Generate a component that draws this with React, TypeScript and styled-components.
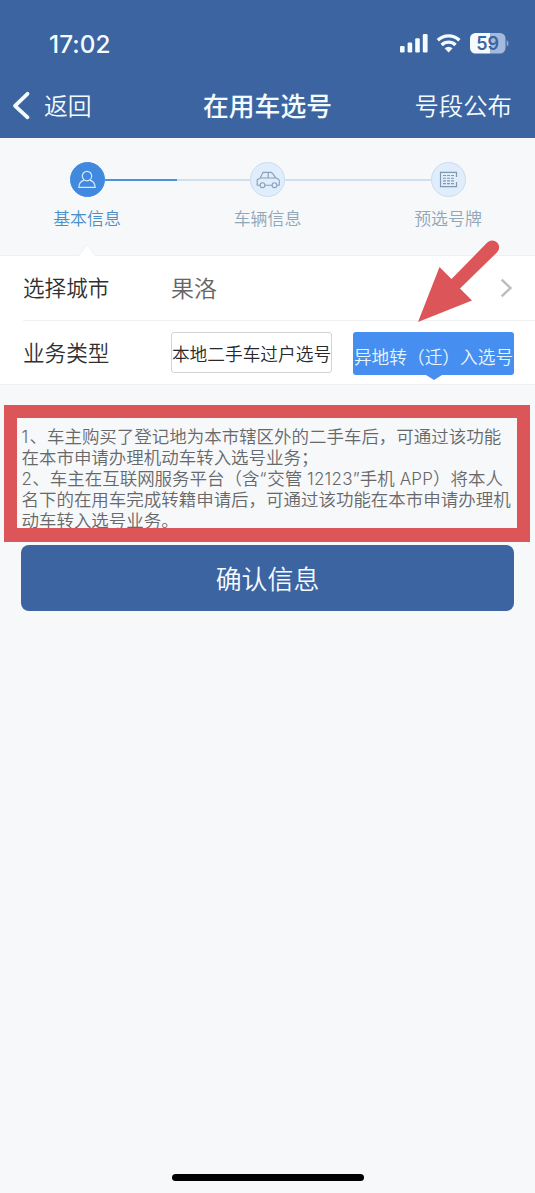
import React from 'react';
import styled, { createGlobalStyle } from 'styled-components';

const GlobalStyle = createGlobalStyle`
  * { box-sizing: border-box; }
  body {
    margin: 0;
    background: #f6f8fa;
    font-family: Inter, 'Noto Sans CJK SC', sans-serif;
  }
`;

const Screen = styled.div`
  position: relative;
  display: flex;
  flex-direction: column;
  width: 535px;
  height: 1193px;
  overflow: hidden;
  background: #f6f8fa;
  font-family: 'Noto Sans CJK SC', sans-serif;
  font-weight: 350;
  white-space: nowrap;
`;

const Header = styled.header`
  height: 138px;
  background: #3c64a1;
  color: #f4fbff;
`;

const StatusBar = styled.div`
  display: flex;
  align-items: center;
  justify-content: space-between;
  height: 74px;
  padding: 13px 26px 0 49px;
`;

const Clock = styled.span`
  font: 550 24.3px/30px Inter, sans-serif;
  letter-spacing: 0.1px;
`;

const NavBar = styled.nav`
  display: grid;
  grid-template-columns: 1fr auto 1fr;
  align-items: center;
  height: 62px;
  padding: 0 23px 0 12px;
`;

const BackButton = styled.div`
  display: flex;
  align-items: center;
  gap: 13px;
  font-size: 23.8px;
  line-height: 36px;
`;

const Title = styled.h1`
  margin: 0;
  padding-left: 11px;
  font-size: 25.8px;
  line-height: 36px;
  font-weight: 500;
`;

const NavAction = styled.span`
  justify-self: end;
  font-size: 24.4px;
  line-height: 36px;
`;

const Steps = styled.section`
  position: relative;
  display: flex;
  justify-content: center;
  height: 118px;
  padding-top: 24px;
  border-bottom: 1px solid #eef0f3;
`;

const Step = styled.div<{ $active?: boolean }>`
  display: flex;
  flex: 0 0 180.5px;
  flex-direction: column;
  align-items: center;
  gap: 8px;
  font-size: 16.9px;
  line-height: 26px;
  color: ${(p) => (p.$active ? '#4a8fca' : '#91a6b6')};
`;

const StepTrack = styled.div`
  display: flex;
  align-items: center;
  width: 100%;
`;

const Line = styled.i<{ $color?: string }>`
  flex: 1;
  height: 2px;
  background: ${(p) => p.$color ?? 'transparent'};
`;

const Circle = styled.div<{ $active?: boolean }>`
  display: flex;
  align-items: center;
  justify-content: center;
  width: 35px;
  height: 35px;
  border: 1.5px solid ${(p) => (p.$active ? '#4189df' : '#cbdcef')};
  border-radius: 50%;
  background: ${(p) => (p.$active ? '#4189df' : '#e0edfc')};
`;

const Notch = styled.svg`
  position: absolute;
  left: 79px;
  bottom: -1px;
`;

const Card = styled.section`
  height: 129px;
  background: #fff;
  border-bottom: 1px solid #eef0f3;
`;

const Row = styled.div<{ $divided?: boolean }>`
  display: flex;
  align-items: center;
  height: ${(p) => (p.$divided ? 65 : 63)}px;
  margin-left: 23px;
  padding-right: 21px;
  border-bottom: ${(p) => (p.$divided ? '1px solid #f0f1f2' : '0')};
`;

const Label = styled.span`
  width: 148px;
  margin-bottom: 2px;
  font-size: 21.6px;
  line-height: 32px;
  color: #303030;
`;

const City = styled.span`
  flex: 1;
  margin-bottom: 2px;
  font-size: 23px;
  line-height: 32px;
  color: #666;
`;

const Options = styled.div`
  display: flex;
  align-items: flex-start;
  gap: 21px;
  height: 41px;
`;

const Option = styled.div<{ $selected?: boolean }>`
  position: relative;
  display: flex;
  align-items: center;
  justify-content: center;
  width: 161px;
  height: ${(p) => (p.$selected ? 43 : 41)}px;
  padding-top: ${(p) => (p.$selected ? 5 : 0)}px;
  border: ${(p) => (p.$selected ? '0' : '1px solid #d3d3d3')};
  border-radius: 3px;
  background: ${(p) => (p.$selected ? '#468ff1' : '#fff')};
  color: ${(p) => (p.$selected ? '#e6f6ff' : '#292929')};
  font-size: 17.7px;
  line-height: 28px;
`;

const Pointer = styled.svg`
  position: absolute;
  left: 73px;
  top: 42px;
`;

const Notes = styled.section`
  position: relative;
  height: 160px;
  padding: 40px 0 0 21.5px;
  color: #67686a;
  font-size: 17.48px;
  line-height: 21px;
`;

const NoteLine = styled.div`
  height: 21px;
`;

const Latin = styled.span<{ $spacing?: number }>`
  font-family: Inter, sans-serif;
  font-weight: 350;
  font-size: 17px;
  line-height: 1;
  letter-spacing: ${(p) => p.$spacing ?? 0}px;
`;

const Highlight = styled.div`
  position: absolute;
  left: 4px;
  top: 20px;
  width: 526px;
  height: 137px;
  border: solid #dc5559;
  border-width: 13px 13px 14px;
`;

const Submit = styled.button`
  height: 66px;
  margin: 0 21px;
  padding: 0;
  border: 0;
  border-radius: 8px;
  background: #3c64a1;
  color: #f4fbff;
  font: 350 25.9px/36px 'Noto Sans CJK SC', sans-serif;
`;

const HomeIndicator = styled.div`
  width: 192px;
  height: 7px;
  margin: auto auto 12px 172px;
  border-radius: 4px;
  background: #000;
`;

const ArrowMark = styled.svg`
  position: absolute;
  left: 410px;
  top: 232px;
`;

const StatusIcons = () => (
  <svg width="112" height="24" viewBox="397 32 112 24" fill="#f4fbff">
    <rect x="400" y="46" width="4.6" height="6.5" rx="1.2" />
    <rect x="407.6" y="42.5" width="4.6" height="10" rx="1.2" />
    <rect x="415.2" y="38.2" width="4.6" height="14.3" rx="1.2" />
    <rect x="422.8" y="34" width="4.8" height="18.5" rx="1.2" />
    <g fill="none" stroke="#f4fbff" strokeWidth="3.3">
      <path d="M437.8 40.2a15.4 15.4 0 0 1 21.6 0" />
      <path d="M441.7 45a9.8 9.8 0 0 1 13.8 0" />
    </g>
    <path d="M444.6 48.3a5.8 5.8 0 0 1 8 0l-4 4.2z" />
    <path d="M475.5 33H490.5V53.5H475.5a5.5 5.5 0 0 1-5.5-5.5V38.5a5.5 5.5 0 0 1 5.5-5.5z" />
    <path fill="#a4b9dc" d="M490.5 33H500a5.5 5.5 0 0 1 5.5 5.5V48a5.5 5.5 0 0 1-5.5 5.5H490.5z" />
    <path fill="#8eabd3" d="M506.7 40.2c2.4 1 2.4 5.3 0 6.3z" />
    <text x="487.7" y="49.6" textAnchor="middle" fill="#3c64a1" fontFamily="Inter" fontWeight="600" fontSize="18">59</text>
  </svg>
);

export default function App() {
  return (
    <Screen>
      <GlobalStyle />
      <Header>
        <StatusBar>
          <Clock>17:02</Clock>
          <StatusIcons />
        </StatusBar>
        <NavBar>
          <BackButton>
            <svg width="19" height="30" viewBox="0 0 19 30" fill="none" stroke="#f4fbff" strokeWidth="3.8" strokeLinecap="round" strokeLinejoin="round">
              <path d="M15.5 3.8 3 15.8l12.5 11.5" />
            </svg>
            返回
          </BackButton>
          <Title>在用车选号</Title>
          <NavAction>号段公布</NavAction>
        </NavBar>
      </Header>

      <Steps>
        <Step $active>
          <StepTrack>
            <Line />
            <Circle $active>
              <svg width="20" height="20" viewBox="0 0 20 20" fill="none" stroke="#d5e9ff" strokeWidth="1.2">
                <circle cx="10" cy="6.1" r="4.7" />
                <path d="M7.2 10.2C4 11.1 2 13.7 1.8 17.3h16.4c-.2-3.6-2.2-6.2-5.4-7.1" />
              </svg>
            </Circle>
            <Line $color="#4b93da" />
          </StepTrack>
          基本信息
        </Step>
        <Step>
          <StepTrack>
            <Line $color="#cfdfee" />
            <Circle>
              <svg width="26" height="20" viewBox="0 0 26 20" fill="none" stroke="#879fb7" strokeWidth="1.1" strokeLinejoin="round">
                <path d="M5.1 15.3H2.2V9.7L5.3 8l2.2-4.8Q7.8 2.4 8.7 2.4h7q1 0 1.6.7l3.5 4.8 2.3 1q1.2.5 1.2 1.8v4.6h-2.2M10 15.3h6.8M5.3 8h15.5M13.2 2.4V8" />
                <circle cx="7.5" cy="15.2" r="2.4" />
                <circle cx="19.5" cy="15.2" r="2.4" />
              </svg>
            </Circle>
            <Line $color="#cfdff1" />
          </StepTrack>
          车辆信息
        </Step>
        <Step>
          <StepTrack>
            <Line $color="#cfdff1" />
            <Circle>
              <svg width="19" height="17" viewBox="0 0 19 17" fill="none" stroke="#8299ad">
                <path d="M17.5 6V1.3h-16v14.4h16V11" strokeWidth="1.2" />
                <path d="M4 4.5h11M4 7.2h11M4 9.9h11M4 12.6h11" strokeDasharray="3 1" strokeWidth="1.1" />
              </svg>
            </Circle>
            <Line />
          </StepTrack>
          预选号牌
        </Step>
        <Notch width="16" height="12" viewBox="0 0 16 12">
          <path d="M0 12 8 1l8 11z" fill="#fff" />
          <path d="M0 11.5 8 1l8 10.5" fill="none" stroke="#eceff2" strokeWidth=".7" />
        </Notch>
      </Steps>

      <Card>
        <Row $divided>
          <Label>选择城市</Label>
          <City>果洛</City>
          <svg width="15" height="20" viewBox="0 0 15 20" fill="none" stroke="#bcbcbc" strokeWidth="2.4">
            <path d="m2.7 1.7 8.7 8.3-8.7 8.3" />
          </svg>
        </Row>
        <Row>
          <Label>业务类型</Label>
          <Options>
            <Option>本地二手车过户选号</Option>
            <Option $selected>
              异地转（迁）入选号
              <Pointer width="16" height="7" viewBox="0 0 16 7">
                <path d="M0 0h16v1L8 6 0 1z" fill="#468ff1" />
              </Pointer>
            </Option>
          </Options>
        </Row>
      </Card>

      <Notes>
        <NoteLine><Latin $spacing={1.3}>1</Latin>、车主购买了登记地为本市辖区外的二手车后，可通过该功能</NoteLine>
        <NoteLine>在本市申请办理机动车转入选号业务；</NoteLine>
        <NoteLine><Latin $spacing={0.4}>2</Latin>、车主在互联网服务平台（含<Latin $spacing={0.8}>“</Latin>交管<Latin $spacing={0.2}> 12123”</Latin>手机<Latin $spacing={0.2}> APP</Latin>）将本人</NoteLine>
        <NoteLine>名下的在用车完成转籍申请后，可通过该功能在本市申请办理机</NoteLine>
        <NoteLine>动车转入选号业务。</NoteLine>
        <Highlight />
      </Notes>

      <Submit>确认信息</Submit>
      <HomeIndicator />

      <ArrowMark width="95" height="95" viewBox="410 232 95 95">
        <path d="M418 322 439.5 267 451.5 279 487.3 242.5a6.9 6.9 0 0 1 9.8 9.8L460 288.5 472 300.5z" fill="#dc5559" />
      </ArrowMark>
    </Screen>
  );
}
